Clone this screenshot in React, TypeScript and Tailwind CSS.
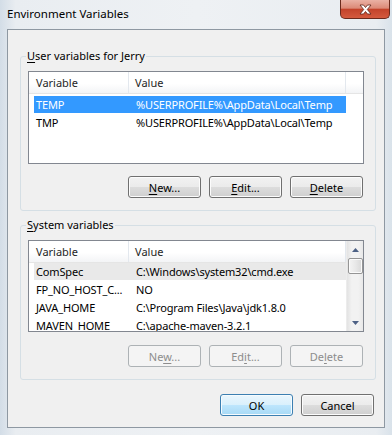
// App.tsx
import { clsx } from "clsx";

type Row = { name: string; value: string; state?: "selected" | "inactive" };

const userRows: Row[] = [
  { name: "TEMP", value: "%USERPROFILE%\\AppData\\Local\\Temp", state: "selected" },
  { name: "TMP", value: "%USERPROFILE%\\AppData\\Local\\Temp" },
];

const systemRows: Row[] = [
  { name: "ComSpec", value: "C:\\Windows\\system32\\cmd.exe", state: "inactive" },
  { name: "FP_NO_HOST_C...", value: "NO" },
  { name: "JAVA_HOME", value: "C:\\Program Files\\Java\\jdk1.8.0" },
  { name: "MAVEN_HOME", value: "C:\\apache-maven-3.2.1" },
];

// label with one underlined access key, e.g. ["Ne", "w", "..."]
const Label = ({ parts }: { parts: [string, string, string] }) => (
  <span>
    {parts[0]}
    <span className="underline underline-offset-2">{parts[1]}</span>
    {parts[2]}
  </span>
);

const WinButton = ({
  parts,
  disabled,
  isDefault,
}: {
  parts: [string, string, string];
  disabled?: boolean;
  isDefault?: boolean;
}) => (
  <div
    className={clsx(
      "w-[73px] h-[22px] rounded-[3px] border flex items-center justify-center text-[11px] leading-none",
      disabled && "border-[#adb2b5] bg-[#f4f4f4] text-[#8d8d8d]",
      isDefault &&
        "border-[#3c7fb1] bg-[linear-gradient(#eaf6fd_0%,#d9f0fc_50%,#bee6fd_50%,#a7d9f5_100%)] shadow-[inset_0_0_0_1px_#f6fbfe] text-black",
      !disabled &&
        !isDefault &&
        "border-[#707070] bg-[linear-gradient(#f2f2f2_0%,#ebebeb_50%,#dddddd_50%,#cfcfcf_100%)] shadow-[inset_0_0_0_1px_#fcfcfc] text-black"
    )}
  >
    <Label parts={parts} />
  </div>
);

const Arrow = ({ up }: { up?: boolean }) => (
  <svg width="7" height="4" viewBox="0 0 7 4">
    <path d={up ? "M0 4 L3.5 0 L7 4 Z" : "M0 0 L3.5 4 L7 0 Z"} fill="#4d6185" />
  </svg>
);

const ListRows = ({ rows, top }: { rows: Row[]; top: string }) => (
  <div className={clsx("flex flex-col gap-[1px]", top)}>
    {rows.map((r) => (
      <div
        key={r.name}
        className={clsx(
          "ml-[5px] w-[312px] h-[17px] flex items-center text-[11px] tracking-[-0.15px] leading-none shrink-0",
          r.state === "selected" && "bg-[#3399ff] text-white",
          r.state === "inactive" && "bg-[#e9e9e9] text-black",
          !r.state && "text-black"
        )}
      >
        <div className="w-[95px] shrink-0 pl-[2px] whitespace-nowrap">{r.name}</div>
        <div className="pl-[7px] whitespace-nowrap">{r.value}</div>
      </div>
    ))}
  </div>
);

const Header = ({ full }: { full?: boolean }) => (
  <div className="h-[22px] flex text-[11px] leading-none text-[#1e1e1e] border-b border-[#e5e5e5] bg-[linear-gradient(#ffffff_0%,#ffffff_55%,#f3f4f6_100%)] shrink-0">
    <div className="w-[100px] shrink-0 pl-[7px] flex items-center border-r border-[#e3e8ee]">Variable</div>
    <div className="w-[217px] shrink-0 pl-[6px] flex items-center border-r border-[#e3e8ee]">Value</div>
    {full && <div className="flex-1" />}
  </div>
);

const GroupBox = ({
  legend,
  children,
}: {
  legend: [string, string, string];
  children: React.ReactNode;
}) => (
  <fieldset className="border border-[#d5dfe5] rounded-[3px] pl-[7px] pr-[11px] pt-[7px] pb-[12px]">
    <legend className="-ml-[2px] px-[1px] text-[11px] leading-[16px] text-black">
      <Label parts={legend} />
    </legend>
    {children}
  </fieldset>
);

export default function App() {
  return (
    <div className="w-[392px] h-[435px] flex flex-col bg-[linear-gradient(90deg,#d3dde7_0%,#e9edf1_4%,#eef1f4_50%,#e9edf1_96%,#d9e2ea_100%)] font-['Noto_Sans','DejaVu_Sans',sans-serif] overflow-hidden">
      {/* title bar */}
      <div className="h-[29px] flex justify-between items-start shrink-0">
        <div className="pl-[7px] pt-[6px] text-[11.5px] leading-[16px] text-black">Environment Variables</div>
        <div className="mr-[2px] w-[50px] h-[19px] rounded-b-[5px] border border-t-0 border-[#6b2a1d] bg-[linear-gradient(#eab1a4_0%,#dc8a78_45%,#c3432b_52%,#d45a3e_100%)] flex items-center justify-center">
          <svg width="13" height="11" viewBox="0 0 13 11">
            <path
              d="M1 1 L4.5 1 L6.5 3.5 L8.5 1 L12 1 L8.3 5.5 L12 10 L8.5 10 L6.5 7.5 L4.5 10 L1 10 L4.7 5.5 Z"
              fill="#ffffff"
              stroke="#5b2216"
              strokeWidth="0.8"
            />
          </svg>
        </div>
      </div>

      {/* client area */}
      <div className="mx-[7px] h-[399px] border border-[#8e98a2] bg-[#f0f0f0] pt-[18px] pl-[12px] pr-[8px] flex flex-col">
        <GroupBox legend={["", "U", "ser variables for Jerry"]}>
          <div className="w-[336px] h-[93px] border border-[#828790] bg-white flex flex-col overflow-hidden">
            <Header full />
            <ListRows rows={userRows} top="pt-[2px]" />
          </div>
          <div className="mt-[12px] flex justify-end gap-[8px] pr-[1px]">
            <WinButton parts={["", "N", "ew..."]} />
            <WinButton parts={["", "E", "dit..."]} />
            <WinButton parts={["", "D", "elete"]} />
          </div>
        </GroupBox>

        <div className="mt-[6px]">
          <GroupBox legend={["", "S", "ystem variables"]}>
            <div className="w-[336px] h-[92px] border border-[#828790] bg-white flex overflow-hidden">
              <div className="w-[317px] flex flex-col">
                <Header />
                <ListRows rows={systemRows} top="pt-0" />
              </div>
              <div className="w-[17px] flex flex-col items-center bg-[linear-gradient(90deg,#e3e3e3,#f2f2f2_30%,#f2f2f2_70%,#e8e8e8)] border-l border-[#ececec]">
                <div className="h-[17px] flex items-center justify-center shrink-0">
                  <Arrow up />
                </div>
                <div className="w-[15px] h-[16px] rounded-[2px] border border-[#959595] bg-[linear-gradient(90deg,#f4f4f4,#e8e8e8_50%,#d8d8d8)] shadow-[inset_0_0_0_1px_#fbfbfb] shrink-0" />
                <div className="flex-1" />
                <div className="h-[17px] flex items-center justify-center shrink-0">
                  <Arrow />
                </div>
              </div>
            </div>
            <div className="mt-[13px] flex justify-end gap-[8px] pr-[1px]">
              <WinButton parts={["Ne", "w", "..."]} disabled />
              <WinButton parts={["Ed", "i", "t..."]} disabled />
              <WinButton parts={["De", "l", "ete"]} disabled />
            </div>
          </GroupBox>
        </div>

        <div className="mt-[14px] flex justify-end gap-[8px] pr-[2px]">
          <WinButton parts={["OK", "", ""]} isDefault />
          <WinButton parts={["Cancel", "", ""]} />
        </div>
      </div>
    </div>
  );
}
